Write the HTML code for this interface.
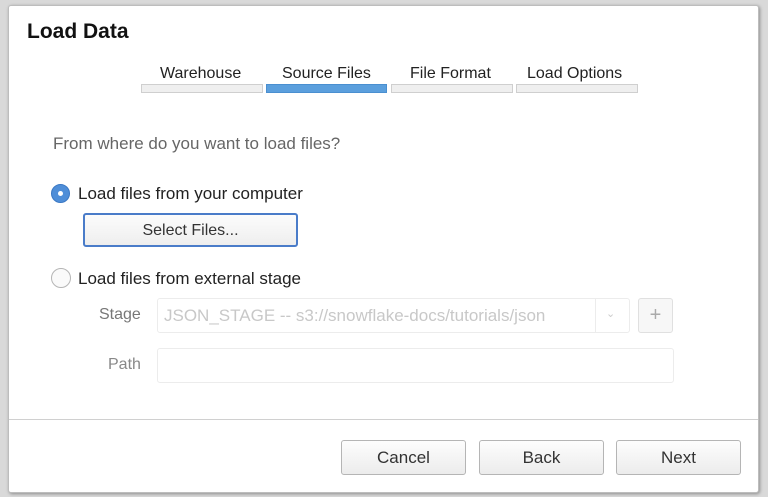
<!DOCTYPE html>
<html><head><meta charset="utf-8"><style>
*{box-sizing:border-box;margin:0;padding:0}
body{width:768px;height:497px;background:#d9d9d9;font-family:"Liberation Sans",sans-serif;position:relative;overflow:hidden}
.dlg{position:absolute;left:8px;top:5px;width:751px;height:488px;background:#fff;border:1px solid #bdbdbd;border-radius:3px;box-shadow:1px 1px 3px rgba(0,0,0,.35)}
.a{position:absolute;white-space:nowrap}
.bar{position:absolute;top:84px;height:9px;background:#efefef;border:1px solid #cfcfcf}
.btn{position:absolute;top:440px;width:125px;height:35px;border:1px solid #b5b5b5;border-radius:3px;background:linear-gradient(#fdfdfd,#ececec);font-size:17px;color:#333;text-align:center;line-height:33px}
</style></head><body>
<div class="dlg"></div>
<div class="a" style="left:27px;top:20px;font-size:21px;font-weight:bold;color:#111">Load Data</div>
<div class="a" style="left:160px;top:65px;font-size:16px;color:#222">Warehouse</div>
<div class="a" style="left:282px;top:65px;font-size:16px;color:#222">Source Files</div>
<div class="a" style="left:410px;top:65px;font-size:16px;color:#222">File Format</div>
<div class="a" style="left:527px;top:65px;font-size:16px;color:#222">Load Options</div>
<div class="bar" style="left:141px;width:122px"></div>
<div class="bar" style="left:266px;width:121px;background:#5b9fdd;border-color:#4a8fd0"></div>
<div class="bar" style="left:391px;width:122px"></div>
<div class="bar" style="left:516px;width:122px"></div>
<div class="a" style="left:53px;top:134px;font-size:17px;color:#666">From where do you want to load files?</div>
<div class="a" style="left:51px;top:184px;width:19px;height:19px;border-radius:50%;background:#4f8ed8;border:1px solid #3b78c4"><div style="position:absolute;left:6px;top:6px;width:5px;height:5px;border-radius:50%;background:#fff"></div></div>
<div class="a" style="left:78px;top:184px;font-size:17px;color:#222">Load files from your computer</div>
<div class="a" style="left:83px;top:213px;width:215px;height:34px;border:2px solid #4a7cc9;border-radius:3px;background:linear-gradient(#fcfcfc,#eeeeee);font-size:16px;color:#333;text-align:center;line-height:31px">Select Files...</div>
<div class="a" style="left:51px;top:268px;width:20px;height:20px;border-radius:50%;border:1px solid #b5b5b5;background:#fafafa"></div>
<div class="a" style="left:78px;top:269px;font-size:17px;color:#222">Load files from external stage</div>
<div class="a" style="left:99px;top:306px;font-size:16px;color:#777">Stage</div>
<div class="a" style="left:157px;top:298px;width:473px;height:35px;border:1px solid #ececec;border-radius:3px"></div>
<div class="a" style="left:595px;top:299px;width:1px;height:33px;background:#ececec"></div>
<div class="a" style="left:606px;top:307px;font-size:11px;color:#ccc">⌄</div>
<div class="a" style="left:164px;top:306px;font-size:17px;color:#c8c8c8">JSON_STAGE -- s3://snowflake-docs/tutorials/json</div>
<div class="a" style="left:638px;top:298px;width:35px;height:35px;border:1px solid #e0e0e0;border-radius:3px;background:#f7f7f7;text-align:center;line-height:32px;font-size:20px;color:#aaa">+</div>
<div class="a" style="left:108px;top:356px;font-size:16px;color:#888">Path</div>
<div class="a" style="left:157px;top:348px;width:517px;height:35px;border:1px solid #ececec;border-radius:3px"></div>
<div class="a" style="left:9px;top:419px;width:749px;height:1px;background:#d0d0d0"></div>
<div class="btn" style="left:341px">Cancel</div>
<div class="btn" style="left:479px">Back</div>
<div class="btn" style="left:616px">Next</div>
</body></html>
